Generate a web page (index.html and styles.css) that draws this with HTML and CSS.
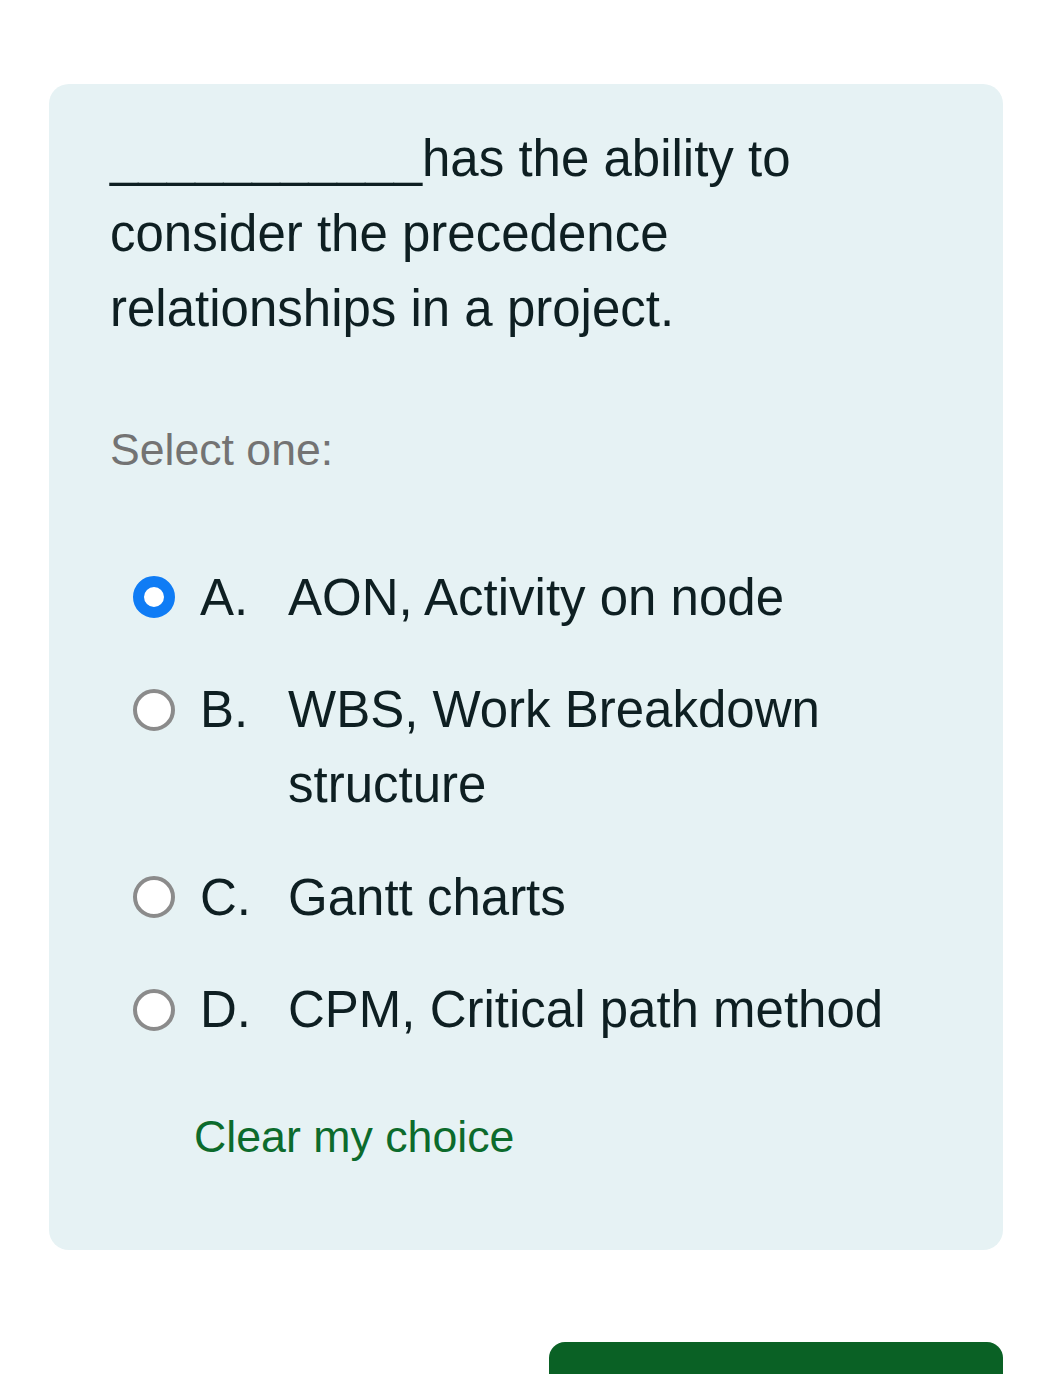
FILE: index.html
```html
<!DOCTYPE html>
<html lang="en">
<head>
<meta charset="utf-8">
<title>Question</title>
<link rel="stylesheet" href="styles.css">
</head>
<body>
<div class="page">
  <div class="card">
    <div class="qtext">___________has the ability to consider the precedence relationships in a project.</div>
    <div class="prompt">Select one:</div>
    <div class="answers">
      <label class="option">
        <span class="radio checked"></span>
        <span class="letter">A.</span>
        <span class="otext">AON, Activity on node</span>
      </label>
      <label class="option">
        <span class="radio"></span>
        <span class="letter">B.</span>
        <span class="otext">WBS, Work Breakdown structure</span>
      </label>
      <label class="option">
        <span class="radio"></span>
        <span class="letter">C.</span>
        <span class="otext">Gantt charts</span>
      </label>
      <label class="option">
        <span class="radio"></span>
        <span class="letter">D.</span>
        <span class="otext">CPM, Critical path method</span>
      </label>
    </div>
    <a class="clear" href="#">Clear my choice</a>
  </div>
  <div class="actions">
    <div class="btn"></div>
  </div>
</div>
</body>
</html>
```

FILE: styles.css
```css
html, body {
  margin: 0;
  padding: 0;
  background: #ffffff;
}
body {
  font-family: "Liberation Sans", Arial, sans-serif;
  color: #0e1f22;
}
.page {
  padding: 84px 47px 0 49px;
}
.card {
  background: #e6f2f4;
  border-radius: 20px;
  padding: 37px 60px 80px 61px;
  display: flex;
  flex-direction: column;
}
.qtext {
  font-size: 51px;
  line-height: 75px;
}
.prompt {
  margin-top: 70px;
  font-size: 44.6px;
  line-height: 67.5px;
  color: #737373;
}
.answers {
  margin-top: 76px;
  display: flex;
  flex-direction: column;
  gap: 37.5px;
}
.option {
  display: flex;
  align-items: flex-start;
  font-size: 51px;
  line-height: 75px;
}
.radio {
  flex: none;
  width: 42px;
  height: 42px;
  box-sizing: border-box;
  border-radius: 50%;
  border: 4px solid #8b8b8b;
  background: #ffffff;
  margin: 16.5px 25px 0 23px;
}
.radio.checked {
  border: 11px solid #0f7cf5;
}
.letter {
  flex: none;
  width: 88px;
}
.otext {
  flex: 1;
  min-width: 0;
}
.clear {
  margin-top: 55.5px;
  margin-left: 84px;
  font-size: 44.7px;
  line-height: 67.5px;
  color: #0c6b2c;
  text-decoration: none;
  align-self: flex-start;
}
.actions {
  display: flex;
  justify-content: flex-end;
  margin-top: 92px;
}
.btn {
  width: 454px;
  height: 80px;
  background: #0a6125;
  border-radius: 16px;
}
```
